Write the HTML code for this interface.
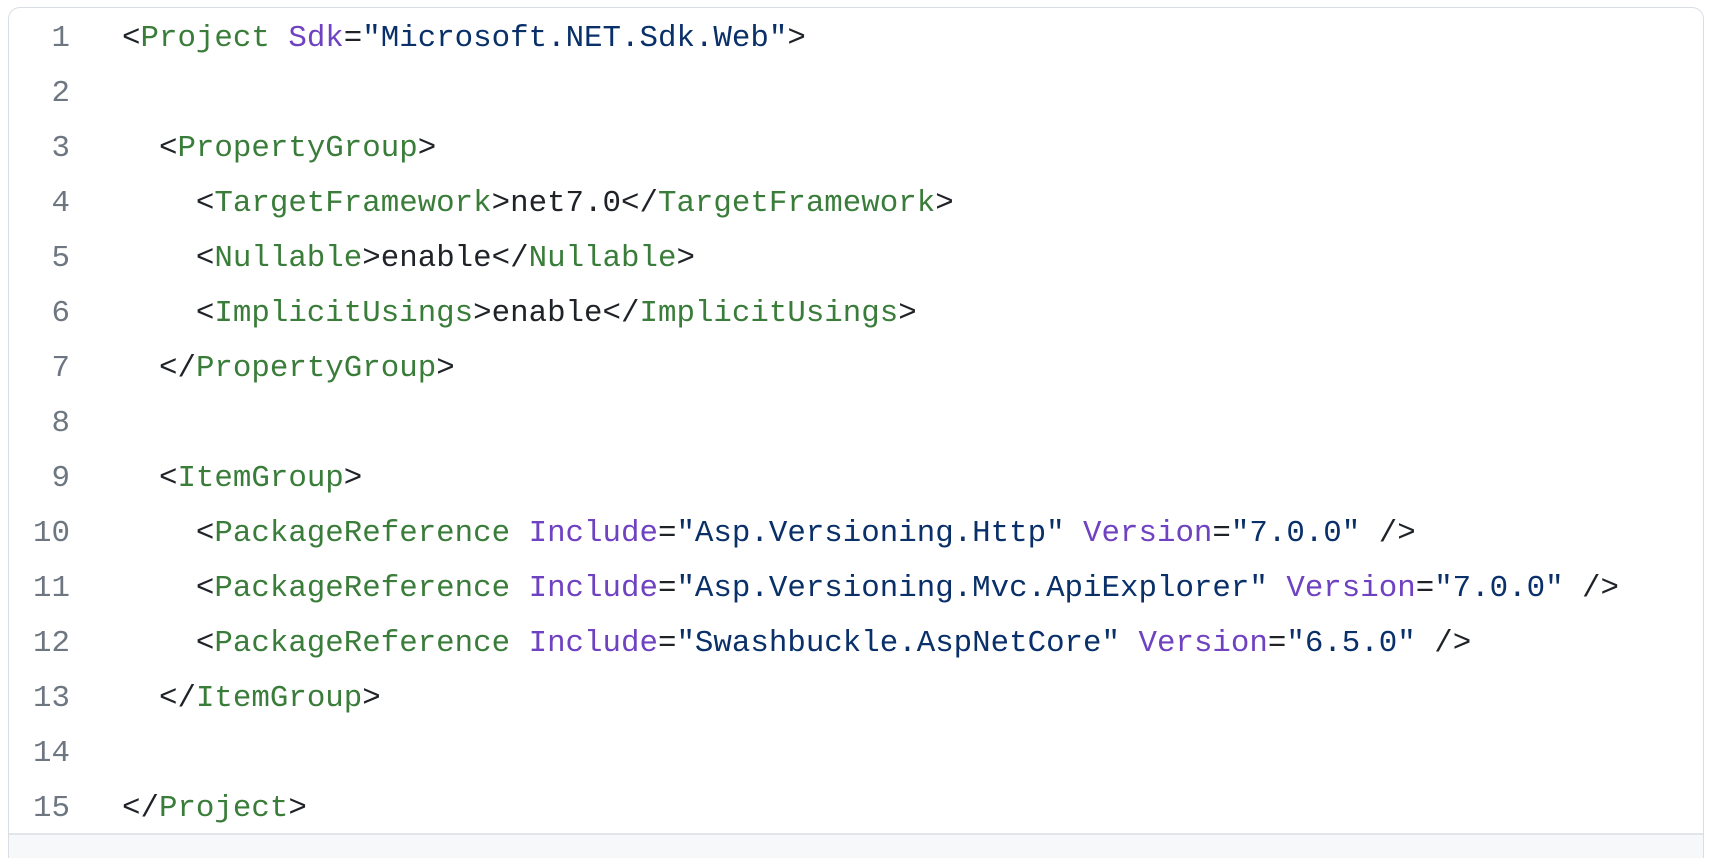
<!DOCTYPE html>
<html><head><style>
html,body{margin:0;padding:0;background:#fff;width:1712px;height:844px;overflow:hidden}
.box{position:absolute;left:8px;top:7px;width:1694px;height:850px;border:1px solid #d8dee4;border-bottom:none;border-radius:12px 12px 0 0;overflow:hidden;background:#fff}
.foot{position:absolute;left:0;right:0;top:825px;height:40px;background:#f6f8fa;border-top:2px solid #e1e4e8}
.code{position:absolute;left:0;top:3px;font-family:"Liberation Mono",monospace;font-size:30.8px;line-height:55px;color:#1f2328;white-space:pre}
.ln{display:inline-block;width:61px;text-align:right;color:#6e7781}
.tx{display:inline-block;margin-left:52px}
.t{color:#3a7d3a}.a{color:#6f42c1}.s{color:#0a3069}
</style></head><body>
<div class="box">
<div class="code"><div><span class="ln">1</span><span class="tx">&lt;<span class="t">Project</span> <span class="a">Sdk</span>=<span class="s">"Microsoft.NET.Sdk.Web"</span>&gt;</span></div><div><span class="ln">2</span><span class="tx"> </span></div><div><span class="ln">3</span><span class="tx">  &lt;<span class="t">PropertyGroup</span>&gt;</span></div><div><span class="ln">4</span><span class="tx">    &lt;<span class="t">TargetFramework</span>&gt;net7.0&lt;/<span class="t">TargetFramework</span>&gt;</span></div><div><span class="ln">5</span><span class="tx">    &lt;<span class="t">Nullable</span>&gt;enable&lt;/<span class="t">Nullable</span>&gt;</span></div><div><span class="ln">6</span><span class="tx">    &lt;<span class="t">ImplicitUsings</span>&gt;enable&lt;/<span class="t">ImplicitUsings</span>&gt;</span></div><div><span class="ln">7</span><span class="tx">  &lt;/<span class="t">PropertyGroup</span>&gt;</span></div><div><span class="ln">8</span><span class="tx"> </span></div><div><span class="ln">9</span><span class="tx">  &lt;<span class="t">ItemGroup</span>&gt;</span></div><div><span class="ln">10</span><span class="tx">    &lt;<span class="t">PackageReference</span> <span class="a">Include</span>=<span class="s">"Asp.Versioning.Http"</span> <span class="a">Version</span>=<span class="s">"7.0.0"</span> /&gt;</span></div><div><span class="ln">11</span><span class="tx">    &lt;<span class="t">PackageReference</span> <span class="a">Include</span>=<span class="s">"Asp.Versioning.Mvc.ApiExplorer"</span> <span class="a">Version</span>=<span class="s">"7.0.0"</span> /&gt;</span></div><div><span class="ln">12</span><span class="tx">    &lt;<span class="t">PackageReference</span> <span class="a">Include</span>=<span class="s">"Swashbuckle.AspNetCore"</span> <span class="a">Version</span>=<span class="s">"6.5.0"</span> /&gt;</span></div><div><span class="ln">13</span><span class="tx">  &lt;/<span class="t">ItemGroup</span>&gt;</span></div><div><span class="ln">14</span><span class="tx"> </span></div><div><span class="ln">15</span><span class="tx">&lt;/<span class="t">Project</span>&gt;</span></div></div>
<div class="foot"></div>
</div>
</body></html>
